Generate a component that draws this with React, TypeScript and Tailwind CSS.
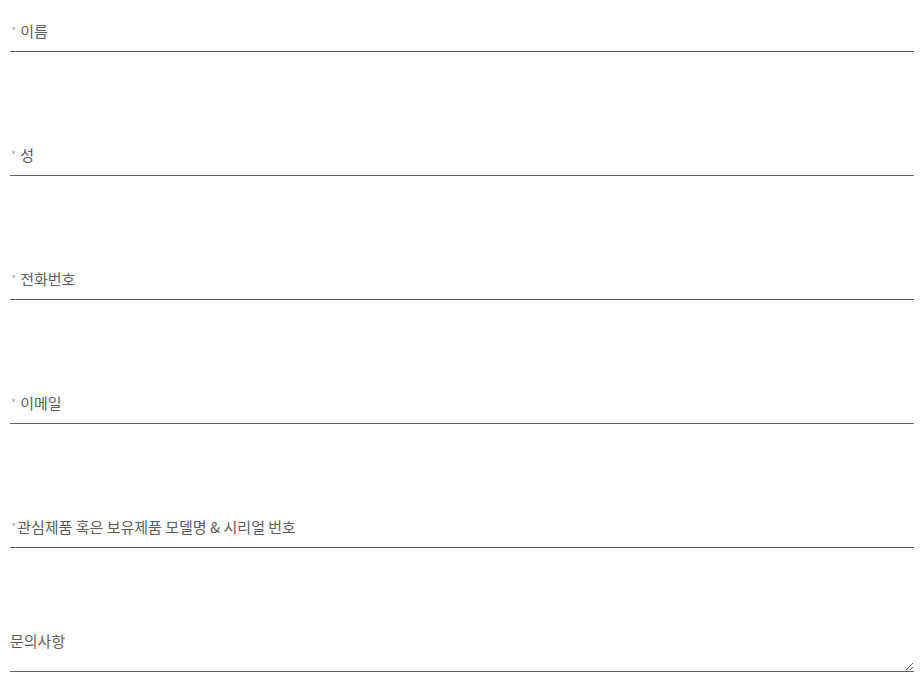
import React from 'react';

const fields = [
  { label: '이름', gap: true },
  { label: '성', gap: true },
  { label: '전화번호', gap: true },
  { label: '이메일', gap: true },
  { label: '관심제품 혹은 보유제품 모델명 & 시리얼 번호', gap: false },
];

export default function App() {
  return (
    <div
      className="w-full min-h-screen bg-white px-[10px] pt-[11px] flex flex-col gap-[83px]"
      style={{ fontFamily: '"Noto Sans CJK KR", "Noto Sans", sans-serif' }}
    >
      {fields.map((f) => (
        <label key={f.label} className="relative block h-[41px] border-b border-[#5f5f5f]">
          <span className="absolute left-0 top-[10px] flex items-center text-[15px] leading-[20px] text-[#5c5c5c] pointer-events-none">
            <span className={`text-[11px] leading-[11px] text-[#a8a8a8] ml-[1px] -mt-[1px] ${f.gap ? 'mr-[4px]' : 'mr-[1px]'}`}>*</span>
            {f.label}
          </span>
          <input className="w-full h-full bg-transparent outline-none text-[15px]" />
        </label>
      ))}
      <textarea
        placeholder="문의사항"
        className="block w-full h-[41px] border-b border-[#5f5f5f] outline-none text-[15px] leading-[20px] pt-0 placeholder:text-[#5c5c5c]"
      />
    </div>
  );
}
